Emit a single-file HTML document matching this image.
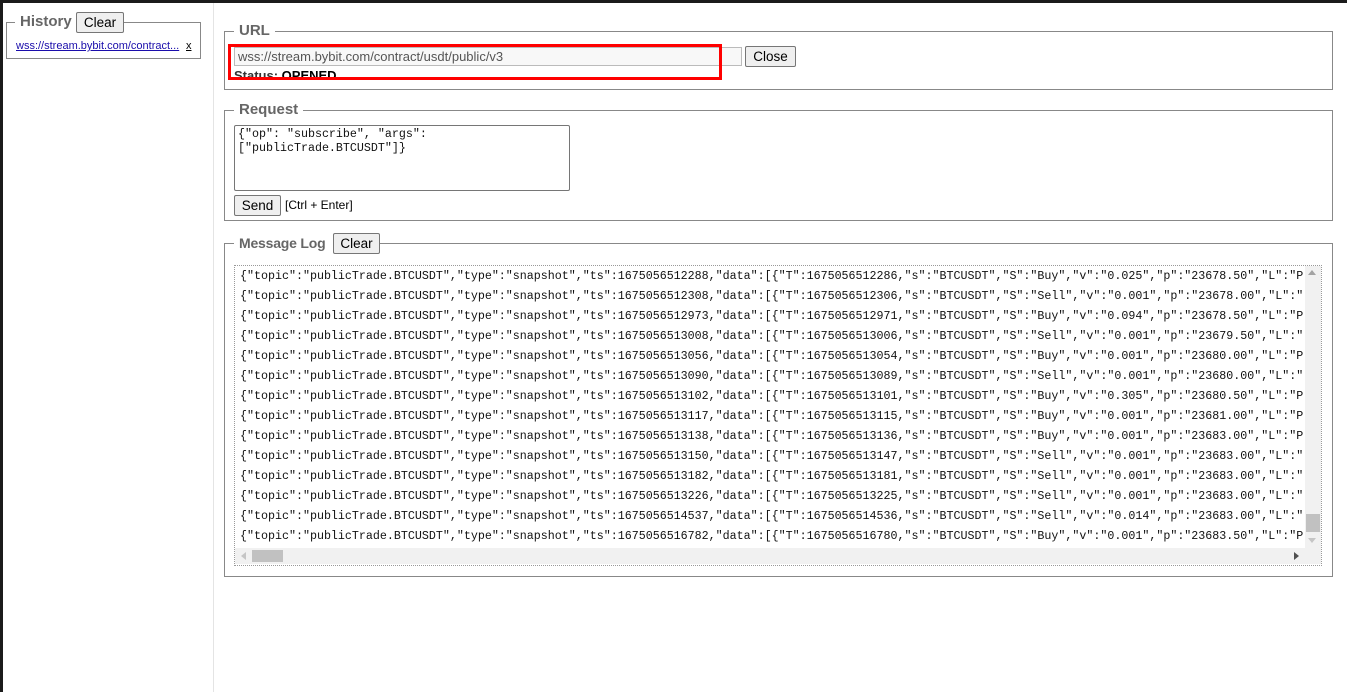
<!DOCTYPE html>
<html><head><meta charset="utf-8"><style>
*{box-sizing:border-box;margin:0;padding:0}
body{width:1347px;height:692px;overflow:hidden;background:#fff;font-family:"Liberation Sans",Arial,sans-serif;position:relative}
.a{position:absolute}
.fs{position:absolute;border:1px solid #888}
.lg{position:absolute;background:#fff;padding:0 5px;color:#666;font-weight:700;font-size:15px;line-height:18px;white-space:nowrap}
.btn{position:absolute;background:#efefef;border:1px solid #767676;border-radius:2px;font-size:13.5px;color:#000;text-align:center}
.log{position:absolute;left:240px;top:266px;width:1064px;height:282px;overflow:hidden;font-family:"Liberation Mono",monospace;font-size:11.67px;line-height:20px;white-space:pre;color:#111}
</style></head><body>
<div class="a" style="left:0;top:0;width:1347px;height:3px;background:#1b1b1b"></div>
<div class="a" style="left:0;top:0;width:3px;height:692px;background:#1b1b1b"></div>
<div class="a" style="left:213px;top:3px;width:1px;height:689px;background:#e4e4e4"></div>

<div class="fs" style="left:6px;top:22px;width:195px;height:37px"></div>
<div class="lg" style="left:15px;top:13px">History</div>
<div class="btn" style="left:76px;top:12px;width:48px;height:21px;line-height:19px">Clear</div>
<div class="a" style="left:16px;top:39px;font-size:11px;color:#1a0dab;text-decoration:underline;line-height:14px">wss://stream.bybit.com/contract...</div>
<div class="a" style="left:186px;top:39px;font-size:11px;color:#000;text-decoration:underline;line-height:14px">x</div>

<div class="fs" style="left:224px;top:31px;width:1109px;height:59px"></div>
<div class="lg" style="left:234px;top:22px">URL</div>
<div class="a" style="left:234px;top:47px;width:508px;height:19px;border:1px solid #bbb;background:#f8f8f8;font-size:13px;color:#555;padding-left:3px;line-height:17px">wss://stream.bybit.com/contract/usdt/public/v3</div>
<div class="btn" style="left:745px;top:46px;width:51px;height:21px;line-height:19px">Close</div>
<div class="a" style="left:234px;top:68px;height:10px;overflow:hidden;font-size:13px;line-height:16px;color:#333;font-weight:bold">Status: <span style="color:#000">OPENED</span></div>
<div class="a" style="left:228px;top:44px;width:494px;height:36px;border:3px solid #f00"></div>

<div class="fs" style="left:224px;top:110px;width:1109px;height:111px"></div>
<div class="lg" style="left:234px;top:101px">Request</div>
<div class="a" style="left:234px;top:125px;width:336px;height:66px;border:1px solid #767676;border-radius:2px;font-family:'Liberation Mono',monospace;font-size:11.67px;line-height:14px;padding:1px 3px;color:#111;white-space:pre">{"op": "subscribe", "args":
["publicTrade.BTCUSDT"]}</div>
<div class="btn" style="left:234px;top:195px;width:47px;height:21px;line-height:19px">Send</div>
<div class="a" style="left:285px;top:198px;font-size:12px;color:#000">[Ctrl + Enter]</div>

<div class="fs" style="left:224px;top:243px;width:1109px;height:334px"></div>
<div class="lg" style="left:234px;top:234px;width:99px;font-size:14px;letter-spacing:-0.2px;overflow:hidden">Message Log</div>
<div class="btn" style="left:333px;top:233px;width:47px;height:21px;line-height:19px">Clear</div>
<div class="a" style="left:234px;top:265px;width:1088px;height:301px;border:1px dotted #999"></div>
<div class="log">{"topic":"publicTrade.BTCUSDT","type":"snapshot","ts":1675056512288,"data":[{"T":1675056512286,"s":"BTCUSDT","S":"Buy","v":"0.025","p":"23678.50","L":"P
{"topic":"publicTrade.BTCUSDT","type":"snapshot","ts":1675056512308,"data":[{"T":1675056512306,"s":"BTCUSDT","S":"Sell","v":"0.001","p":"23678.00","L":"
{"topic":"publicTrade.BTCUSDT","type":"snapshot","ts":1675056512973,"data":[{"T":1675056512971,"s":"BTCUSDT","S":"Buy","v":"0.094","p":"23678.50","L":"P
{"topic":"publicTrade.BTCUSDT","type":"snapshot","ts":1675056513008,"data":[{"T":1675056513006,"s":"BTCUSDT","S":"Sell","v":"0.001","p":"23679.50","L":"
{"topic":"publicTrade.BTCUSDT","type":"snapshot","ts":1675056513056,"data":[{"T":1675056513054,"s":"BTCUSDT","S":"Buy","v":"0.001","p":"23680.00","L":"P
{"topic":"publicTrade.BTCUSDT","type":"snapshot","ts":1675056513090,"data":[{"T":1675056513089,"s":"BTCUSDT","S":"Sell","v":"0.001","p":"23680.00","L":"
{"topic":"publicTrade.BTCUSDT","type":"snapshot","ts":1675056513102,"data":[{"T":1675056513101,"s":"BTCUSDT","S":"Buy","v":"0.305","p":"23680.50","L":"P
{"topic":"publicTrade.BTCUSDT","type":"snapshot","ts":1675056513117,"data":[{"T":1675056513115,"s":"BTCUSDT","S":"Buy","v":"0.001","p":"23681.00","L":"P
{"topic":"publicTrade.BTCUSDT","type":"snapshot","ts":1675056513138,"data":[{"T":1675056513136,"s":"BTCUSDT","S":"Buy","v":"0.001","p":"23683.00","L":"P
{"topic":"publicTrade.BTCUSDT","type":"snapshot","ts":1675056513150,"data":[{"T":1675056513147,"s":"BTCUSDT","S":"Sell","v":"0.001","p":"23683.00","L":"
{"topic":"publicTrade.BTCUSDT","type":"snapshot","ts":1675056513182,"data":[{"T":1675056513181,"s":"BTCUSDT","S":"Sell","v":"0.001","p":"23683.00","L":"
{"topic":"publicTrade.BTCUSDT","type":"snapshot","ts":1675056513226,"data":[{"T":1675056513225,"s":"BTCUSDT","S":"Sell","v":"0.001","p":"23683.00","L":"
{"topic":"publicTrade.BTCUSDT","type":"snapshot","ts":1675056514537,"data":[{"T":1675056514536,"s":"BTCUSDT","S":"Sell","v":"0.014","p":"23683.00","L":"
{"topic":"publicTrade.BTCUSDT","type":"snapshot","ts":1675056516782,"data":[{"T":1675056516780,"s":"BTCUSDT","S":"Buy","v":"0.001","p":"23683.50","L":"P</div>
<div class="a" style="left:1305px;top:266px;width:16px;height:282px;background:#f1f1f1"></div>
<div class="a" style="left:1308px;top:270px;width:0;height:0;border-left:4px solid transparent;border-right:4px solid transparent;border-bottom:5px solid #a3a3a3"></div>
<div class="a" style="left:1308px;top:538px;width:0;height:0;border-left:4px solid transparent;border-right:4px solid transparent;border-top:5px solid #c5c5c5"></div>
<div class="a" style="left:1306px;top:514px;width:14px;height:18px;background:#c1c1c1"></div>
<div class="a" style="left:235px;top:548px;width:1086px;height:16px;background:#f1f1f1"></div>
<div class="a" style="left:241px;top:552px;width:0;height:0;border-top:4px solid transparent;border-bottom:4px solid transparent;border-right:5px solid #c5c5c5"></div>
<div class="a" style="left:1294px;top:552px;width:0;height:0;border-top:4px solid transparent;border-bottom:4px solid transparent;border-left:5px solid #505050"></div>
<div class="a" style="left:252px;top:550px;width:31px;height:12px;background:#c1c1c1"></div>
</body></html>
